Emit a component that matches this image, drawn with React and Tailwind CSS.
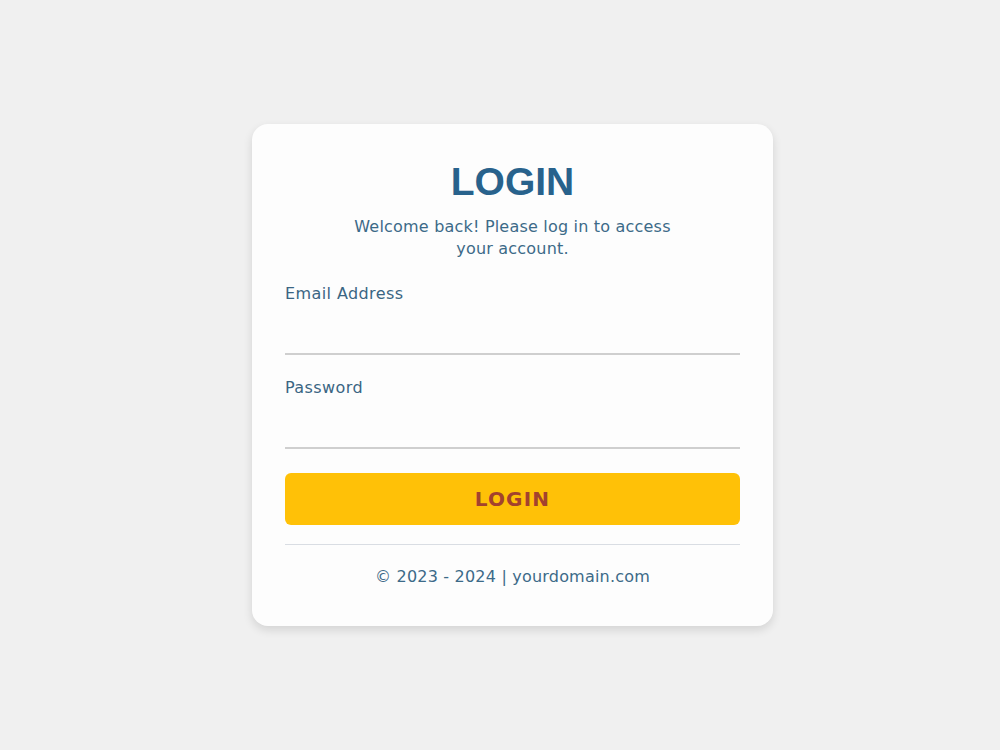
import React, { useState } from 'react';

const body = { fontFamily: '"DejaVu Sans", "Open Sans", sans-serif' };

export default function App() {
  const [email, setEmail] = useState('');
  const [password, setPassword] = useState('');

  return (
    <div className="min-h-screen w-full bg-[#f0f0f0] flex items-start justify-center pt-[124px] pl-[25px]" style={body}>
      <div className="w-[521px] bg-[#fdfdfd] rounded-[16px] shadow-[0_4px_10px_rgba(0,0,0,0.12)] px-[33px] pt-[38px] pb-[37px]">
        {/* Header */}
        <h1 className="text-center text-[39px] leading-[40px] font-bold text-[#28628c]" style={{ fontFamily: '"Liberation Sans", Arial, sans-serif' }}>
          LOGIN
        </h1>
        <p className="mx-auto mt-[14px] w-[334px] text-center text-[16px] leading-[22px] tracking-[0.2px] text-[#3c6a88]">
          Welcome back! Please log in to access your account.
        </p>

        {/* Form */}
        <form className="mt-[22px]" onSubmit={(e) => e.preventDefault()}>
          <label className="block text-[16px] leading-[24px] tracking-[0.4px] text-[#3a6583]">Email Address</label>
          <input
            type="email"
            value={email}
            onChange={(e) => setEmail(e.target.value)}
            className="mt-[8px] block w-full h-[41px] bg-transparent border-b-2 border-[#cfcfcf] outline-none text-[16px] text-[#3a6583]"
          />

          <label className="mt-[21px] block text-[16px] leading-[24px] tracking-[0.4px] text-[#3a6583]">Password</label>
          <input
            type="password"
            value={password}
            onChange={(e) => setPassword(e.target.value)}
            className="mt-[8px] block w-full h-[41px] bg-transparent border-b-2 border-[#cfcfcf] outline-none text-[16px] text-[#3a6583]"
          />

          <button
            type="submit"
            className="mt-[24px] w-full h-[52px] rounded-[6px] bg-[#ffc107] text-[#a3422e] text-[20px] font-bold tracking-[1.2px]"
          >
            LOGIN
          </button>
        </form>

        <div className="mt-[19px] h-px bg-[#d9dde3]" />

        <p className="mt-[20px] text-center text-[16px] leading-[24px] tracking-[0.2px] text-[#3c6a88]">
          © 2023 - 2024 | yourdomain.com
        </p>
      </div>
    </div>
  );
}
